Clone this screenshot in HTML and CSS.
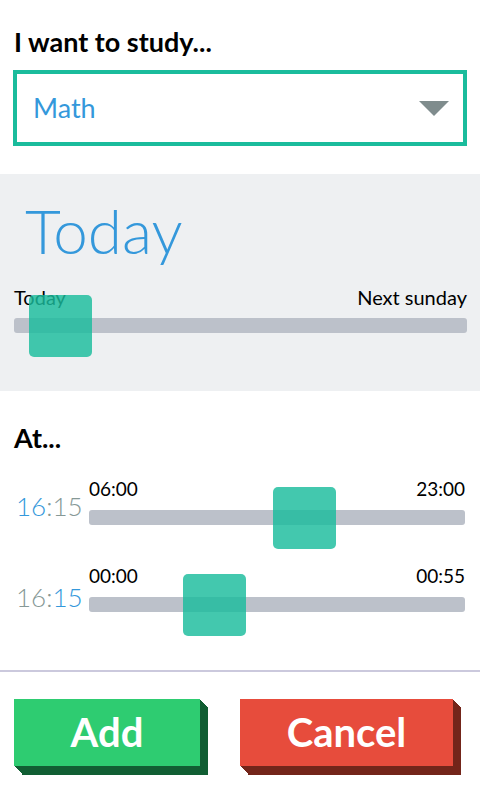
FILE: index.html
```html
<!DOCTYPE html>
<html>
<head>
<meta charset="utf-8">
<link rel="stylesheet" href="styles.css">
</head>
<body>
<div class="page">
  <h2 class="heading study">I want to study...</h2>
  <div class="select">
    <span class="select-value">Math</span>
    <span class="caret"></span>
  </div>

  <section class="day">
    <div class="day-title">Today</div>
    <div class="slider day-slider">
      <div class="labels"><span>Today</span><span>Next sunday</span></div>
      <div class="track"></div>
      <div class="thumb" style="left:15px"></div>
    </div>
  </section>

  <h2 class="heading at">At...</h2>

  <div class="time-row first">
    <div class="time"><span class="blue">16</span><span class="grey">:15</span></div>
    <div class="slider">
      <div class="labels"><span>06:00</span><span>23:00</span></div>
      <div class="track"></div>
      <div class="thumb" style="left:184px"></div>
    </div>
  </div>

  <div class="time-row second">
    <div class="time"><span class="grey">16:</span><span class="blue">15</span></div>
    <div class="slider">
      <div class="labels"><span>00:00</span><span>00:55</span></div>
      <div class="track"></div>
      <div class="thumb" style="left:94px"></div>
    </div>
  </div>

  <div class="divider"></div>

  <div class="buttons">
    <button class="btn btn-add">Add</button>
    <button class="btn btn-cancel">Cancel</button>
  </div>
</div>
</body>
</html>
```

FILE: styles.css
```css
html, body {
  margin: 0;
  padding: 0;
  background: #ffffff;
}

body {
  font-family: Lato, "Open Sans", sans-serif;
  color: #000;
  width: 480px;
  height: 795px;
  overflow: hidden;
}

.page {
  display: flex;
  flex-direction: column;
}

.heading {
  margin: 0;
  padding-left: 14px;
  font-size: 27px;
  line-height: 32px;
  font-weight: 700;
  color: #000;
}

.study {
  margin-top: 26px;
}

.select {
  margin: 12px 13px 0 13px;
  height: 68px;
  border: 4px solid #1abc9c;
  display: flex;
  align-items: center;
  justify-content: space-between;
  padding: 0 14px 0 16px;
}

.select-value {
  font-size: 27px;
  line-height: 68px;
  color: #3498db;
}

.caret {
  width: 0;
  height: 0;
  border-left: 15px solid transparent;
  border-right: 15px solid transparent;
  border-top: 15px solid #7f8c8d;
  margin-top: 1px;
}

.day {
  margin-top: 28px;
  background: #eef0f2;
  padding: 19px 13px 58px 14px;
}

.day-title {
  font-size: 62px;
  line-height: 74px;
  font-weight: 300;
  color: #3498db;
  padding-left: 11px;
}

.day-slider {
  margin-top: 19px;
}

.slider {
  position: relative;
  flex: 1;
}

.labels {
  display: flex;
  justify-content: space-between;
  font-size: 19px;
  line-height: 22px;
  color: #000;
}

.day-slider .labels {
  font-size: 20px;
}

.track {
  margin-top: 10px;
  height: 15px;
  background: #bcc1ca;
  border-radius: 3px;
}

.thumb {
  position: absolute;
  bottom: -24px;
  width: 63px;
  height: 62px;
  border-radius: 5px;
  background: rgba(26, 188, 156, 0.82);
}

.at {
  margin-top: 31px;
}

.time-row {
  display: flex;
  align-items: flex-end;
  padding: 0 15px 0 16px;
}

.time-row.first {
  margin-top: 24px;
}

.time-row.second {
  margin-top: 40px;
}

.time {
  width: 73px;
  font-size: 26px;
  line-height: 32px;
  font-weight: 300;
  white-space: nowrap;
}

.first .time {
  margin-bottom: 3px;
}

.second .time {
  margin-bottom: -1px;
}

.blue {
  color: #3498db;
}

.grey {
  color: #869896;
}

.divider {
  margin-top: 58px;
  height: 2px;
  background: #cbc9dd;
}

.buttons {
  display: flex;
  padding: 27px 0 0 14px;
  gap: 40px;
}

.btn {
  height: 67px;
  border: none;
  padding: 0;
  margin: 0;
  font-family: Lato, "Open Sans", sans-serif;
  font-size: 40px;
  font-weight: 700;
  color: #fff;
  line-height: 67px;
  text-align: center;
  border-radius: 0;
}

.btn-add {
  width: 186px;
  background: #2ecc71;
  box-shadow: 1px 1px 0 #115e33, 2px 2px 0 #115e33, 3px 3px 0 #115e33,
    4px 4px 0 #115e33, 5px 5px 0 #115e33, 6px 6px 0 #115e33,
    7px 7px 0 #115e33, 8px 8px 0 #115e33, 8px 9px 0 #115e33;
}

.btn-cancel {
  width: 213px;
  background: #e74c3c;
  box-shadow: 1px 1px 0 #73251a, 2px 2px 0 #73251a, 3px 3px 0 #73251a,
    4px 4px 0 #73251a, 5px 5px 0 #73251a, 6px 6px 0 #73251a,
    7px 7px 0 #73251a, 8px 8px 0 #73251a, 8px 9px 0 #73251a;
}
```
